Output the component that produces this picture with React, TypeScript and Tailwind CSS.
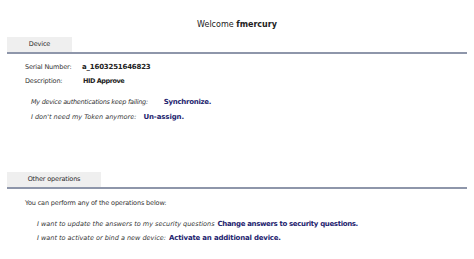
import React from 'react'

const font = { fontFamily: '"DejaVu Sans", Verdana, sans-serif' }

function SectionTab({ label, width }: { label: string; width: string }) {
  return (
    <div className="border-b-2 border-[#8e96aa]">
      <div className={`${width} h-[15px] bg-[#efefef] flex items-center justify-center text-[6.5px] tracking-[-0.15px] text-[#2a2a2a]`}>
        {label}
      </div>
    </div>
  )
}

const link = 'not-italic font-bold text-[7px] text-[#23236e]'

export default function App() {
  return (
    <div className="w-[474px] h-[259px] bg-white px-[7px] text-[#333]" style={font}>
      <div className="h-[37px] pt-[19px] text-center text-[8px] leading-[12px] text-[#222]">
        Welcome <span className="font-bold">fmercury</span>
      </div>

      <SectionTab label="Device" width="w-[65px]" />

      <div className="pl-[18px] pt-[6px] text-[6.5px] leading-[14px]">
        <div className="flex">
          <span className="w-[57px] tracking-[-0.15px]">Serial Number:</span>
          <span className="font-bold text-[7px] text-[#222] tracking-[-0.2px]">a_1603251646823</span>
        </div>
        <div className="flex">
          <span className="w-[58px] tracking-[-0.15px]">Description:</span>
          <span className="font-bold text-[6.5px] text-[#222] tracking-[-0.45px]">HID Approve</span>
        </div>
        <div className="pl-[6px] pt-[7px] italic leading-[15px]">
          <div>
            <span className="tracking-[-0.28px]">My device authentications keep failing:</span>
            <a className={`${link} ml-[16px] tracking-[-0.3px]`}>Synchronize.</a>
          </div>
          <div>
            I don't need my Token anymore:
            <a className={`${link} ml-[7px] tracking-[-0.1px]`}>Un-assign.</a>
          </div>
        </div>
      </div>

      <div className="h-[47px]" />

      <SectionTab label="Other operations" width="w-[94px]" />

      <div className="pl-[18px] pt-[7px] text-[6.5px] leading-[14px]">
        <div className="tracking-[-0.15px]">You can perform any of the operations below:</div>
        <div className="pl-[12px] pt-[7px] italic">
          <div>
            I want to update the answers to my security questions
            <a className={`${link} ml-[3px] tracking-[-0.35px]`}>Change answers to security questions.</a>
          </div>
          <div>
            I want to activate or bind a new device:
            <a className={`${link} ml-[3px] tracking-[-0.2px]`}>Activate an additional device.</a>
          </div>
        </div>
      </div>
    </div>
  )
}
